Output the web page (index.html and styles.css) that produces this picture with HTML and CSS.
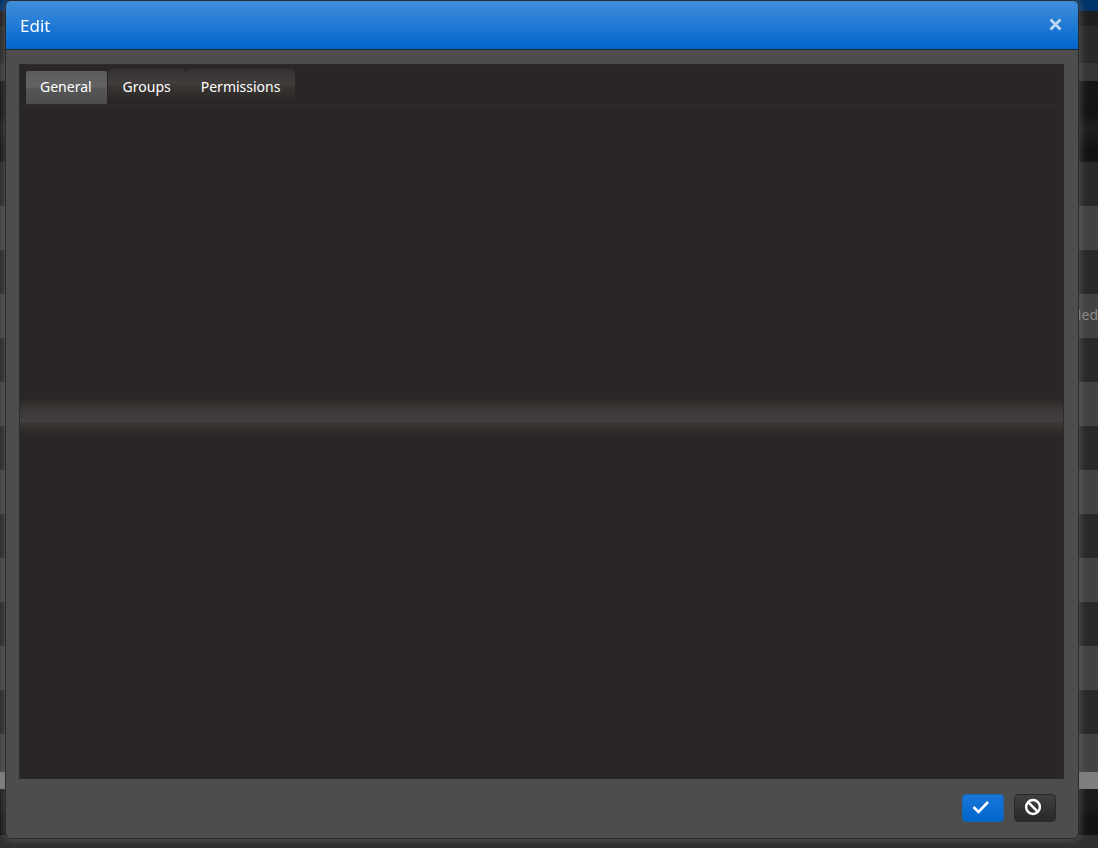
FILE: index.html
```html
<!DOCTYPE html>
<html lang="en">
<head>
  <meta charset="UTF-8">
  <meta name="viewport" content="width=device-width, initial-scale=1.0">
  <title>Edit</title>
  <link rel="stylesheet" href="styles.css">
</head>
<body>
  <!-- page behind the dialog -->
  <div class="page">
    <div class="navbar"></div>
    <div class="subnav"></div>
    <div class="header"></div>
    <div class="toolbar"></div>
    <div class="filters"></div>
    <div class="list">
      <div class="row"></div>
      <div class="row"></div>
      <div class="row"></div>
      <div class="row">Med</div>
      <div class="row"></div>
      <div class="row"></div>
      <div class="row"></div>
      <div class="row"></div>
      <div class="row"></div>
      <div class="row"></div>
      <div class="row"></div>
      <div class="row"></div>
      <div class="row"></div>
      <div class="row last"></div>
    </div>
    <div class="scroll"></div>
    <div class="bottom"></div>
  </div>

  <div class="overlay">
    <div class="modal" role="dialog" aria-labelledby="title">
      <div class="modal-header">
        <h1 class="title" id="title">Edit</h1>
        <button class="close" type="button" aria-label="Close">
          <svg width="13" height="13" viewBox="0 0 13 13"><path d="M1.5 1.5l10 10M11.5 1.5l-10 10" fill="none" stroke="currentColor" stroke-width="2.7"/></svg>
        </button>
      </div>
      <div class="modal-body">
        <div class="panel">
          <div class="tabs" role="tablist">
            <button class="tab active" type="button" role="tab" aria-selected="true">General</button>
            <button class="tab" type="button" role="tab" aria-selected="false">Groups</button>
            <button class="tab" type="button" role="tab" aria-selected="false">Permissions</button>
          </div>
          <div class="content" role="tabpanel"></div>
        </div>
      </div>
      <div class="modal-footer">
        <button class="btn primary" type="button" aria-label="Save">
          <svg width="18" height="18" viewBox="0 0 18 18"><path d="M1.500 9l5 5L16 4" fill="none" stroke="currentColor" stroke-width="2.6"/></svg>
        </button>
        <button class="btn" type="button" aria-label="Cancel">
          <svg width="18" height="18" viewBox="0 0 18 18"><g fill="none" stroke="currentColor" stroke-width="2.5"><circle cx="9" cy="9" r="6.9"/><path d="M4.200 4.200l9.600 9.600"/></g></svg>
        </button>
      </div>
    </div>
  </div>
</body>
</html>
```

FILE: styles.css
```css
html, body {
  margin: 0;
  height: 100%;
}
body {
  background-color: #2f2f2f;
  font-family: "Noto Sans", "Open Sans", sans-serif;
  font-size: 14px;
  overflow: hidden;
}
.navbar {
  height: 11px;
  background-color: #003468;
}
.subnav {
  height: 15px;
  background-color: #1e1e1e;
}
.header {
  height: 37px;
  background-color: #292929;
}
.toolbar {
  height: 18px;
  background-color: #353535;
}
.filters {
  height: 81px;
  background: linear-gradient(#171515, #141212 40%, #1f1e1e 58%, #131112 85%, #151314);
}
.row {
  display: flex;
  justify-content: flex-end;
  height: 44px;
  line-height: 42px;
  background-color: #282828;
  color: #8c8c8c;
}
.row:nth-child(even) {
  background-color: #424242;
}
.row.last {
  height: 38px;
}
.scroll {
  height: 17px;
  background-color: #7f7f7f;
}
.bottom {
  height: 46px;
  background: linear-gradient(#1d1c1c, #1a1919 45%, #141212 60%);
}
.overlay {
  position: fixed;
  inset: 0;
  display: flex;
  padding: 0 19px 9px 5px;
}
.modal {
  display: flex;
  flex-direction: column;
  flex: 1;
  background-color: #4d4d4d;
  border: 1px solid #2b2b2b;
  border-radius: 6px;
  box-shadow: 0 0 10px rgba(120, 120, 120, 0.7);
}
.modal-header {
  display: flex;
  align-items: center;
  justify-content: space-between;
  height: 48px;
  padding: 0 16px 0 14px;
  background: linear-gradient(#408edb, #0066cc);
  border-bottom: 1px solid #1f2b38;
  border-radius: 5px 5px 0 0;
}
.title {
  margin: 0;
  color: white;
  font-size: 17px;
  font-weight: normal;
}
.close {
  display: flex;
  padding: 0 0 2px;
  background: none;
  border: none;
  color: #bfd9f2;
  cursor: pointer;
}
.modal-body {
  display: flex;
  flex: 1;
  padding: 14px 14px 0 13px;
}
.panel {
  display: flex;
  flex-direction: column;
  flex: 1;
  border: 1px solid #2c2a2a;
  background-color: #2a2625;
}
.tabs {
  display: flex;
  align-items: flex-end;
  height: 39px;
  margin: 0 6px;
}
.tab {
  height: 35px;
  padding: 0 15px;
  background: linear-gradient(#343231, #403d3b 40%, #393634 50%, #2a2625 90%);
  border: none;
  border-radius: 4px 4px 0 0;
  color: white;
  font-family: inherit;
  font-size: 14px;
  cursor: pointer;
}
.tab.active {
  height: 33px;
  padding: 0 15px 2px 14px;
  margin-right: 1px;
  background: linear-gradient(#5c5c5c, #636363 48%, #565656 52%, #4d4d4d);
  border-radius: 2px 2px 0 0;
}
.content {
  flex: 1;
  background: linear-gradient(transparent calc(50% - 44px), #3a3836 calc(50% - 32px), #423f3e calc(50% - 20px), #3a3836 calc(50% - 19px), transparent calc(50% - 6px));
  border-top: 1px solid #2e2b2a;
}
.modal-footer {
  display: flex;
  justify-content: flex-end;
  gap: 10px;
  padding: 15px 22px 16px;
}
.btn {
  display: flex;
  align-items: center;
  width: 42px;
  height: 28px;
  padding: 0 0 2px 9px;
  background: linear-gradient(#404040, #282828);
  border: 1px solid #2a2a2a;
  border-radius: 4px;
  color: white;
  cursor: pointer;
}
.btn.primary {
  background: linear-gradient(#1a77d8, #0066cc);
  border-color: #1866b5;
}
```
